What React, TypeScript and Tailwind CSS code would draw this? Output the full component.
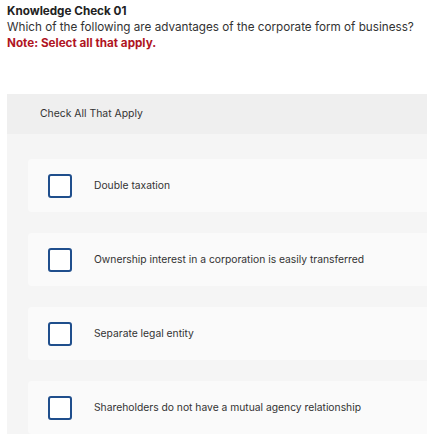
const options = [
  "Double taxation",
  "Ownership interest in a corporation is easily transferred",
  "Separate legal entity",
  "Shareholders do not have a mutual agency relationship",
];

export default function App() {
  return (
    <div
      className="h-[445px] w-[427px] overflow-hidden bg-white text-[#333]"
      style={{ fontFamily: 'Inter, "Liberation Sans", sans-serif' }}
    >
      <div className="px-[7px] pt-[3px] text-[11.7px] leading-4">
        <p className="font-bold text-[#222]">Knowledge Check 01</p>
        <p>Which of the following are advantages of the corporate form of business?</p>
        <p className="font-bold text-[#b0151f]">Note: Select all that apply.</p>
      </div>

      <div className="ml-[7px] mt-[43px] w-[440px] bg-[#f5f5f5]">
        <div className="flex h-10 items-center bg-[#efefef] pl-[33px] text-[10.4px]">
          Check All That Apply
        </div>
        <div className="flex flex-col gap-[21px] pl-[21px] pt-[25px]">
          {options.map((o) => (
            <label
              key={o}
              className="flex h-[53px] items-center rounded-sm bg-[#fafafa] pl-5"
            >
              <span className="h-6 w-6 shrink-0 rounded-[3px] border-2 border-[#1f4e8c] bg-white" />
              <span className="ml-[22px] text-[10.3px]">{o}</span>
            </label>
          ))}
        </div>
      </div>
    </div>
  );
}
